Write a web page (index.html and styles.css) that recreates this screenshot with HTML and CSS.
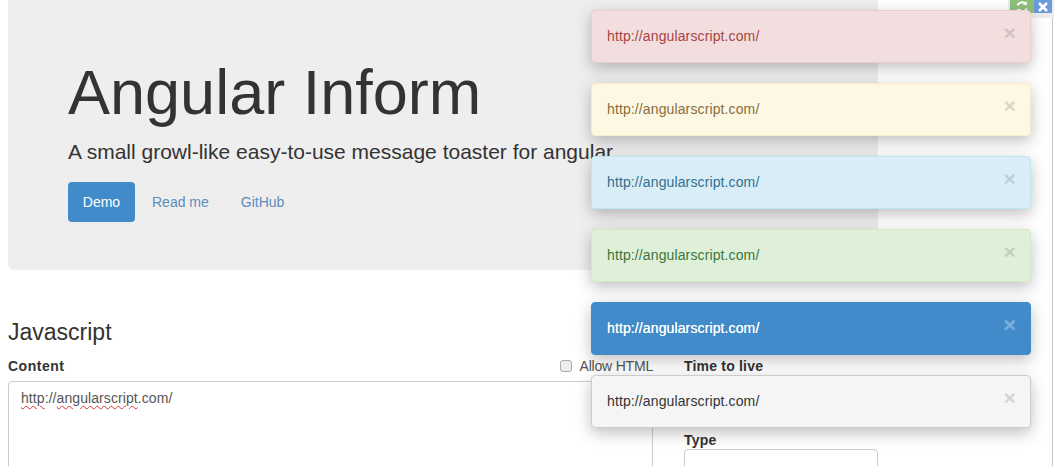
FILE: index.html
```html
<!DOCTYPE html>
<html lang="en">

<head>
    <meta charset="UTF-8">
    <title>Angular Inform</title>
    <link rel="stylesheet" href="styles.css">
</head>

<body>
    <div class="container">
        <div class="jumbotron">
            <h1>Angular Inform</h1>
            <p class="lead">A small growl-like easy-to-use message toaster for angular.</p>
            <div class="nav">
                <a class="btn-primary">Demo</a>
                <a class="link">Read me</a>
                <a class="link">GitHub</a>
            </div>
        </div>

        <h2>Javascript</h2>
        <div class="form">
            <div class="col-left">
                <div class="label-row">
                    <label class="label">Content</label>
                    <label class="check"><span class="checkbox"></span>Allow HTML</label>
                </div>
                <div class="textarea"><span class="typo">http</span>://<span class="typo">angularscript</span>.com/</div>
            </div>
            <div class="col-right">
                <label class="label">Time to live</label>
                <div class="input"></div>
                <label class="label">Type</label>
                <div class="select"></div>
            </div>
        </div>
    </div>

    <!-- 右边的竖线 -->
    <div class="edge"></div>

    <!-- 右上角的小工具 -->
    <div class="corner">
        <span class="corner-green">
            <svg width="14" height="14" viewBox="0 0 14 14" fill="none" stroke="#fff" stroke-width="2">
                <path d="M2.5 5.5a4.8 4.8 0 0 1 8.300-1.300M11.500 8.500a4.800 4.800 0 0 1-8.300 1.300"/>
                <path d="M11.800 1v4h-4zM2.200 13V9h4z" fill="#fff" stroke="none"/>
            </svg>
        </span>
        <span class="corner-blue">
            <svg width="12" height="12" viewBox="0 0 12 12" fill="none" stroke="#fff" stroke-width="2.600">
                <path d="M2 2l8 8M10 2l-8 8"/>
            </svg>
        </span>
    </div>

    <div class="toasts">
        <div class="toast danger"><span>http://angularscript.com/</span><span class="close">×</span></div>
        <div class="toast warning"><span>http://angularscript.com/</span><span class="close">×</span></div>
        <div class="toast info"><span>http://angularscript.com/</span><span class="close">×</span></div>
        <div class="toast success"><span>http://angularscript.com/</span><span class="close">×</span></div>
        <div class="toast primary"><span>http://angularscript.com/</span><span class="close">×</span></div>
        <div class="toast plain"><span>http://angularscript.com/</span><span class="close">×</span></div>
    </div>
</body>

</html>
```

FILE: styles.css
```css
* {
    margin: 0;
    padding: 0;
    box-sizing: border-box;
}

html,
body {
    height: 466px;
    overflow: hidden;
}

body {
    font-family: "Liberation Sans", Arial, sans-serif;
    font-size: 14px;
    line-height: 20px;
    color: #333;
    background: #fff;
}

.container {
    width: 870px;
    height: 466px;
    margin-left: 8px;
    overflow: hidden;
}

.jumbotron {
    height: 270px;
    padding: 58px 60px 0;
    background: #eee;
    border-radius: 0 0 6px 6px;
}

h1 {
    font-size: 63px;
    font-weight: 400;
    line-height: 69px;
}

.lead {
    margin-top: 10px;
    font-size: 21px;
    line-height: 30px;
    white-space: nowrap;
}

.nav {
    display: flex;
    align-items: center;
    margin-top: 15px;
}

.btn-primary {
    width: 67px;
    height: 40px;
    margin-right: 1px;
    line-height: 40px;
    text-align: center;
    color: #fff;
    background: #428bca;
    border-radius: 4px;
}

.link {
    padding: 0 16px;
    color: #5b8dbd;
}

h2 {
    margin-top: 49px;
    font-size: 23px;
    font-weight: 400;
    line-height: 26px;
}

.form {
    display: flex;
    margin-top: 11px;
}

.col-left {
    width: 645px;
}

.col-right {
    width: 194px;
    margin-left: 31px;
}

.label-row {
    display: flex;
    justify-content: space-between;
}

.label {
    display: block;
    height: 20px;
    font-weight: 700;
    letter-spacing: 0.2px;
}

.label-row .label {
    letter-spacing: 0.5px;
}

.check {
    display: flex;
    align-items: center;
    color: #555;
    letter-spacing: -0.2px;
}

.checkbox {
    width: 12px;
    height: 12px;
    margin-right: 8px;
    background: #ededed;
    border: 1px solid #aaa;
    border-radius: 3px;
}

.textarea {
    height: 120px;
    margin-top: 5px;
    padding: 6px 12px;
    color: #555;
    letter-spacing: 0.08px;
    border: 1px solid #ccc;
    border-radius: 4px;
}

.typo {
    text-decoration: underline wavy #d33 1px;
    text-underline-offset: 2px;
}

.input {
    height: 34px;
    margin-top: 5px;
    margin-bottom: 15px;
}

.select {
    height: 34px;
    margin-top: -1px;
    border: 1px solid #ccc;
    border-radius: 4px;
}

.edge {
    position: absolute;
    top: 0;
    right: 1px;
    bottom: 0;
    width: 1px;
    background: #c4c4c4;
}

/* 右上角 */
.corner {
    position: absolute;
    top: 0;
    right: 0;
    display: flex;
    padding: 0 2px 5px 2px;
    background: #ececec;
}

.corner-green,
.corner-blue {
    display: flex;
    align-items: center;
    justify-content: center;
    height: 13px;
    overflow: hidden;
}

.corner-green {
    width: 24px;
    background: #8cc17a;
    border-radius: 0 0 0 3px;
}

.corner-blue {
    width: 18px;
    background: #6a9bdc;
}

.toasts {
    position: absolute;
    top: 10px;
    left: 591px;
    width: 440px;
    display: flex;
    flex-direction: column;
    gap: 20px;
}

.toast {
    position: relative;
    height: 53px;
    padding: 15px;
    letter-spacing: 0.12px;
    border: 1px solid transparent;
    border-radius: 4px;
    box-shadow: 0 5px 15px rgba(0, 0, 0, 0.25);
}

.close {
    position: absolute;
    top: 11px;
    right: 14px;
    font-size: 21px;
    font-weight: 700;
    line-height: 21px;
    color: #000;
    opacity: 0.13;
}

.danger {
    color: #a94442;
    background: #f2dede;
    border-color: #ebccd1;
}

.warning {
    color: #8a6d3b;
    background: #fcf8e3;
    border-color: #faebcc;
}

.info {
    color: #31708f;
    background: #d9edf7;
    border-color: #bce8f1;
}

.success {
    color: #3c763d;
    background: #dff0d8;
    border-color: #d6e9c6;
}

.primary {
    color: #fff;
    background: #428bca;
    border-color: #428bca;
    text-shadow: 0 0 0.6px #fff;
}

.primary .close {
    color: #fff;
    opacity: 0.3;
}

.plain {
    color: #333;
    background: #f5f5f5;
    border-color: #ccc;
}
```
